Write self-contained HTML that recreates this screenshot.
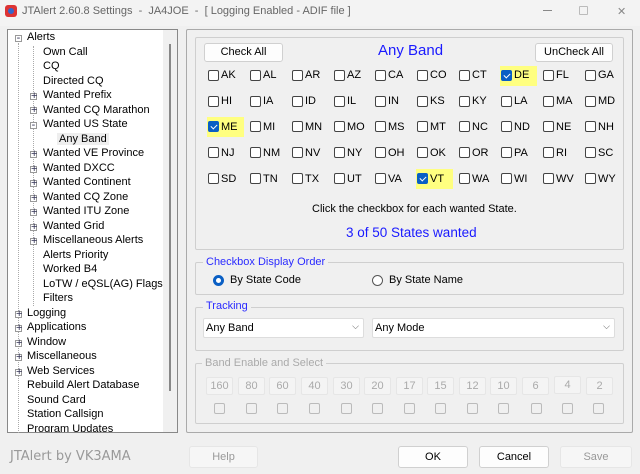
<!DOCTYPE html>
<html><head><meta charset="utf-8"><style>
*{box-sizing:border-box;margin:0;padding:0}
body{width:640px;height:474px;background:#f0f0f0;font-family:"Liberation Sans",sans-serif;font-size:11px;color:#000;position:relative;overflow:hidden}
.a{position:absolute;white-space:nowrap}
.btn{position:absolute;background:#fdfdfd;border:1px solid #d0d0d0;border-radius:3px;text-align:center;font-size:11px}
.cb{position:absolute;width:11px;height:11px;border:1px solid #444;border-radius:2px;background:#fff}
.ck{background:#0a5fc4;border-color:#0a5fc4}
.ck:after{content:"";position:absolute;left:3px;top:1px;width:3px;height:5px;border:solid #fff;border-width:0 1px 1px 0;transform:rotate(45deg)}
.t{position:absolute;font-size:11px}
.hl{position:absolute;background:#ffff80;height:20px;width:37px}
.tree div{position:absolute;font-size:11px;white-space:nowrap}
.px{position:absolute;width:7px;height:7px;border:1px solid #999;font-size:7px;line-height:5px;text-align:center;color:#335;background:#fff}
.grp{position:absolute;border:1px solid #cfcfcf;border-radius:2px}
.lg{position:absolute;background:#f0f0f0;padding:0 3px;font-size:11px}
.bb{position:absolute;width:27px;height:18px;background:#f4f4f4;border:1px solid #e6e6e6;border-radius:2px;color:#aaa;text-align:center;line-height:16px;font-size:11px}
.bc{position:absolute;width:11px;height:11px;border:1px solid #bbb;border-radius:2px}
</style></head><body>
<div class="a" style="left:0;top:0;width:640px;height:26px;background:#f3f3f3"></div>
<div class="a" style="left:5px;top:5px;width:12px;height:12px;background:#d33;border-radius:3px"></div>
<div class="a" style="left:8px;top:8px;width:6px;height:6px;background:#36c;border-radius:3px"></div>
<div class="a" style="left:22px;top:5px;color:#666;font-size:11px">JTAlert 2.60.8 Settings &nbsp;- &nbsp;JA4JOE &nbsp;- &nbsp;[ Logging Enabled - ADIF file ]</div>
<div class="a" style="left:543px;top:10px;width:9px;height:1px;background:#888"></div>
<div class="a" style="left:579px;top:6px;width:9px;height:9px;border:1px solid #bbb;border-radius:1px"></div>
<div class="a" style="left:617px;top:5px;color:#888;font-size:11px">✕</div>

<div class="a" style="left:7px;top:29px;width:171px;height:404px;border:1px solid #888;background:#fff"></div>
<div class="a" style="left:163px;top:30px;width:14px;height:402px;background:#f0f0f0"></div>
<div class="a" style="left:169px;top:44px;width:2px;height:347px;background:#888"></div>
<div class="tree">
<div class="px" style="left:15px;top:35px">-</div><div style="left:27px;top:31px">Alerts</div>
<div class="a" style="left:18px;top:43px;width:1px;height:390px;border-left:1px dotted #aaa"></div>
<div class="a" style="left:33px;top:46px;width:1px;height:260px;border-left:1px dotted #aaa"></div>
<div style="left:43px;top:46px">Own Call</div>
<div style="left:43px;top:60px">CQ</div>
<div style="left:43px;top:75px">Directed CQ</div>
<div class="px" style="left:30px;top:93px">+</div><div style="left:43px;top:89px">Wanted Prefix</div>
<div class="px" style="left:30px;top:107px">+</div><div style="left:43px;top:104px">Wanted CQ Marathon</div>
<div class="px" style="left:30px;top:122px">-</div><div style="left:43px;top:118px">Wanted US State</div>
<div style="left:57px;top:133px;background:#eee;padding:0 2px">Any Band</div>
<div class="px" style="left:30px;top:151px">+</div><div style="left:43px;top:147px">Wanted VE Province</div>
<div class="px" style="left:30px;top:166px">+</div><div style="left:43px;top:162px">Wanted DXCC</div>
<div class="px" style="left:30px;top:180px">+</div><div style="left:43px;top:176px">Wanted Continent</div>
<div class="px" style="left:30px;top:195px">+</div><div style="left:43px;top:191px">Wanted CQ Zone</div>
<div class="px" style="left:30px;top:209px">+</div><div style="left:43px;top:205px">Wanted ITU Zone</div>
<div class="px" style="left:30px;top:224px">+</div><div style="left:43px;top:220px">Wanted Grid</div>
<div class="px" style="left:30px;top:238px">+</div><div style="left:43px;top:234px">Miscellaneous Alerts</div>
<div style="left:43px;top:249px">Alerts Priority</div>
<div style="left:43px;top:263px">Worked B4</div>
<div style="left:43px;top:278px">LoTW / eQSL(AG) Flags</div>
<div style="left:43px;top:292px">Filters</div>
<div class="px" style="left:15px;top:311px">+</div><div style="left:27px;top:307px">Logging</div>
<div class="px" style="left:15px;top:325px">+</div><div style="left:27px;top:321px">Applications</div>
<div class="px" style="left:15px;top:340px">+</div><div style="left:27px;top:336px">Window</div>
<div class="px" style="left:15px;top:354px">+</div><div style="left:27px;top:350px">Miscellaneous</div>
<div class="px" style="left:15px;top:369px">+</div><div style="left:27px;top:365px">Web Services</div>
<div style="left:27px;top:379px">Rebuild Alert Database</div>
<div style="left:27px;top:394px">Sound Card</div>
<div style="left:27px;top:408px">Station Callsign</div>
<div style="left:27px;top:423px;height:9px;overflow:hidden">Program Updates</div>
</div>

<div class="grp" style="left:186px;top:29px;width:447px;height:404px;border-color:#aaa"></div>
<div class="grp" style="left:195px;top:37px;width:429px;height:213px"></div>
<div class="btn" style="left:204px;top:43px;width:79px;height:19px;line-height:17px">Check All</div>
<div class="btn" style="left:535px;top:43px;width:78px;height:19px;line-height:17px">UnCheck All</div>
<div class="a" style="left:378px;top:42px;color:#1a1aff;font-size:15px">Any Band</div>

<div class="hl" style="left:500px;top:66px"></div>
<div class="hl" style="left:207px;top:117px"></div>
<div class="hl" style="left:416px;top:169px"></div>

<div class="cb" style="left:208px;top:70px"></div><div class="t" style="left:221px;top:69px">AK</div>
<div class="cb" style="left:250px;top:70px"></div><div class="t" style="left:263px;top:69px">AL</div>
<div class="cb" style="left:292px;top:70px"></div><div class="t" style="left:305px;top:69px">AR</div>
<div class="cb" style="left:334px;top:70px"></div><div class="t" style="left:347px;top:69px">AZ</div>
<div class="cb" style="left:375px;top:70px"></div><div class="t" style="left:388px;top:69px">CA</div>
<div class="cb" style="left:417px;top:70px"></div><div class="t" style="left:430px;top:69px">CO</div>
<div class="cb" style="left:459px;top:70px"></div><div class="t" style="left:472px;top:69px">CT</div>
<div class="cb ck" style="left:501px;top:70px"></div><div class="t" style="left:514px;top:69px">DE</div>
<div class="cb" style="left:543px;top:70px"></div><div class="t" style="left:556px;top:69px">FL</div>
<div class="cb" style="left:585px;top:70px"></div><div class="t" style="left:598px;top:69px">GA</div>
<div class="cb" style="left:208px;top:96px"></div><div class="t" style="left:221px;top:95px">HI</div>
<div class="cb" style="left:250px;top:96px"></div><div class="t" style="left:263px;top:95px">IA</div>
<div class="cb" style="left:292px;top:96px"></div><div class="t" style="left:305px;top:95px">ID</div>
<div class="cb" style="left:334px;top:96px"></div><div class="t" style="left:347px;top:95px">IL</div>
<div class="cb" style="left:375px;top:96px"></div><div class="t" style="left:388px;top:95px">IN</div>
<div class="cb" style="left:417px;top:96px"></div><div class="t" style="left:430px;top:95px">KS</div>
<div class="cb" style="left:459px;top:96px"></div><div class="t" style="left:472px;top:95px">KY</div>
<div class="cb" style="left:501px;top:96px"></div><div class="t" style="left:514px;top:95px">LA</div>
<div class="cb" style="left:543px;top:96px"></div><div class="t" style="left:556px;top:95px">MA</div>
<div class="cb" style="left:585px;top:96px"></div><div class="t" style="left:598px;top:95px">MD</div>
<div class="cb ck" style="left:208px;top:121px"></div><div class="t" style="left:221px;top:121px">ME</div>
<div class="cb" style="left:250px;top:121px"></div><div class="t" style="left:263px;top:121px">MI</div>
<div class="cb" style="left:292px;top:121px"></div><div class="t" style="left:305px;top:121px">MN</div>
<div class="cb" style="left:334px;top:121px"></div><div class="t" style="left:347px;top:121px">MO</div>
<div class="cb" style="left:375px;top:121px"></div><div class="t" style="left:388px;top:121px">MS</div>
<div class="cb" style="left:417px;top:121px"></div><div class="t" style="left:430px;top:121px">MT</div>
<div class="cb" style="left:459px;top:121px"></div><div class="t" style="left:472px;top:121px">NC</div>
<div class="cb" style="left:501px;top:121px"></div><div class="t" style="left:514px;top:121px">ND</div>
<div class="cb" style="left:543px;top:121px"></div><div class="t" style="left:556px;top:121px">NE</div>
<div class="cb" style="left:585px;top:121px"></div><div class="t" style="left:598px;top:121px">NH</div>
<div class="cb" style="left:208px;top:147px"></div><div class="t" style="left:221px;top:147px">NJ</div>
<div class="cb" style="left:250px;top:147px"></div><div class="t" style="left:263px;top:147px">NM</div>
<div class="cb" style="left:292px;top:147px"></div><div class="t" style="left:305px;top:147px">NV</div>
<div class="cb" style="left:334px;top:147px"></div><div class="t" style="left:347px;top:147px">NY</div>
<div class="cb" style="left:375px;top:147px"></div><div class="t" style="left:388px;top:147px">OH</div>
<div class="cb" style="left:417px;top:147px"></div><div class="t" style="left:430px;top:147px">OK</div>
<div class="cb" style="left:459px;top:147px"></div><div class="t" style="left:472px;top:147px">OR</div>
<div class="cb" style="left:501px;top:147px"></div><div class="t" style="left:514px;top:147px">PA</div>
<div class="cb" style="left:543px;top:147px"></div><div class="t" style="left:556px;top:147px">RI</div>
<div class="cb" style="left:585px;top:147px"></div><div class="t" style="left:598px;top:147px">SC</div>
<div class="cb" style="left:208px;top:173px"></div><div class="t" style="left:221px;top:173px">SD</div>
<div class="cb" style="left:250px;top:173px"></div><div class="t" style="left:263px;top:173px">TN</div>
<div class="cb" style="left:292px;top:173px"></div><div class="t" style="left:305px;top:173px">TX</div>
<div class="cb" style="left:334px;top:173px"></div><div class="t" style="left:347px;top:173px">UT</div>
<div class="cb" style="left:375px;top:173px"></div><div class="t" style="left:388px;top:173px">VA</div>
<div class="cb ck" style="left:417px;top:173px"></div><div class="t" style="left:430px;top:173px">VT</div>
<div class="cb" style="left:459px;top:173px"></div><div class="t" style="left:472px;top:173px">WA</div>
<div class="cb" style="left:501px;top:173px"></div><div class="t" style="left:514px;top:173px">WI</div>
<div class="cb" style="left:543px;top:173px"></div><div class="t" style="left:556px;top:173px">WV</div>
<div class="cb" style="left:585px;top:173px"></div><div class="t" style="left:598px;top:173px">WY</div>

<div class="a" style="left:312px;top:203px">Click the checkbox for each wanted State.</div>
<div class="a" style="left:346px;top:225px;color:#1a1aff;font-size:13.5px">3 of 50 States wanted</div>

<div class="grp" style="left:195px;top:262px;width:429px;height:33px"></div>
<div class="lg" style="left:203px;top:256px;color:#2a2aff">Checkbox Display Order</div>
<div class="a" style="left:213px;top:275px;width:11px;height:11px;border-radius:50%;border:3px solid #0a5fc4;background:#fff"></div>
<div class="a" style="left:230px;top:274px">By State Code</div>
<div class="a" style="left:372px;top:275px;width:11px;height:11px;border-radius:50%;border:1px solid #555;background:#fff"></div>
<div class="a" style="left:389px;top:274px">By State Name</div>

<div class="grp" style="left:195px;top:307px;width:429px;height:44px"></div>
<div class="lg" style="left:203px;top:300px;color:#2a2aff">Tracking</div>
<div class="a" style="left:203px;top:318px;width:161px;height:20px;background:#fff;border:1px solid #ddd;border-radius:2px;padding:3px 2px">Any Band<span style="position:absolute;right:4px;top:2px;color:#555;font-size:9px">⌵</span></div>
<div class="a" style="left:372px;top:318px;width:243px;height:20px;background:#fff;border:1px solid #ddd;border-radius:2px;padding:3px 2px">Any Mode<span style="position:absolute;right:4px;top:2px;color:#555;font-size:9px">⌵</span></div>

<div class="grp" style="left:195px;top:363px;width:429px;height:61px"></div>
<div class="lg" style="left:202px;top:357px;color:#aaa">Band Enable and Select</div>
<div class="bb" style="left:206px;top:377px">160</div><div class="bc" style="left:214px;top:403px"></div>
<div class="bb" style="left:238px;top:377px">80</div><div class="bc" style="left:246px;top:403px"></div>
<div class="bb" style="left:269px;top:377px">60</div><div class="bc" style="left:277px;top:403px"></div>
<div class="bb" style="left:301px;top:377px">40</div><div class="bc" style="left:309px;top:403px"></div>
<div class="bb" style="left:333px;top:377px">30</div><div class="bc" style="left:341px;top:403px"></div>
<div class="bb" style="left:364px;top:377px">20</div><div class="bc" style="left:372px;top:403px"></div>
<div class="bb" style="left:396px;top:377px">17</div><div class="bc" style="left:404px;top:403px"></div>
<div class="bb" style="left:427px;top:377px">15</div><div class="bc" style="left:435px;top:403px"></div>
<div class="bb" style="left:459px;top:377px">12</div><div class="bc" style="left:467px;top:403px"></div>
<div class="bb" style="left:490px;top:377px">10</div><div class="bc" style="left:498px;top:403px"></div>
<div class="bb" style="left:522px;top:377px">6</div><div class="bc" style="left:531px;top:403px"></div>
<div class="bb" style="left:554px;top:376px">4</div><div class="bc" style="left:562px;top:403px"></div>
<div class="bb" style="left:586px;top:377px">2</div><div class="bc" style="left:593px;top:403px"></div>

<div class="a" style="left:10px;top:449px;color:#999;font-size:13px;font-family:'DejaVu Sans',sans-serif">JTAlert by VK3AMA</div>
<div class="btn" style="left:189px;top:446px;width:69px;height:22px;line-height:20px;color:#999;background:#f6f6f6;border-color:#e6e6e6">Help</div>
<div class="btn" style="left:398px;top:446px;width:70px;height:22px;line-height:20px">OK</div>
<div class="btn" style="left:479px;top:446px;width:70px;height:22px;line-height:20px">Cancel</div>
<div class="btn" style="left:560px;top:446px;width:72px;height:22px;line-height:20px;color:#999;background:#f6f6f6;border-color:#e6e6e6">Save</div>
</body></html>
